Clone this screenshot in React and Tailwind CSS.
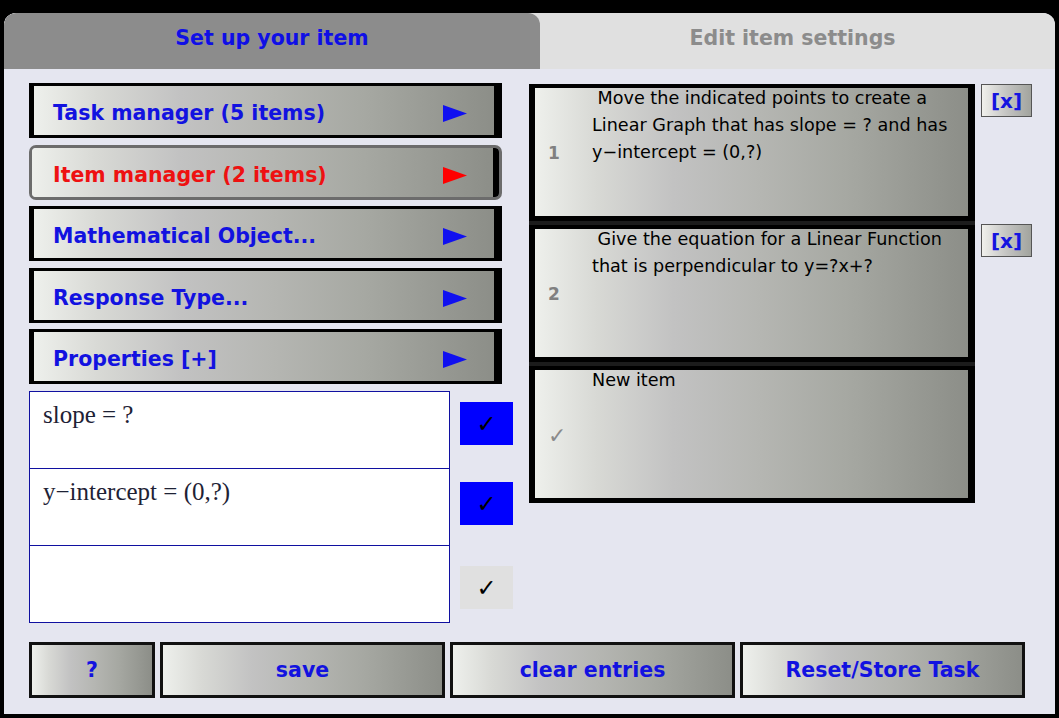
import React from "react";

const metal =
  "bg-[linear-gradient(to_right,#eef0ec_0%,#d8d9d5_14%,#c2c2c2_32%,#b5b6b2_52%,#a6a8a2_72%,#8c8e88_100%)]";

const sans = { fontFamily: '"DejaVu Sans", Verdana, sans-serif' };
const serif = { fontFamily: '"Liberation Serif", "Times New Roman", serif' };

function Arrow({ color }) {
  return (
    <svg width="24" height="17" viewBox="0 0 24 17" className="shrink-0">
      <polygon points="0,0 24,8.5 0,17" fill={color} />
    </svg>
  );
}

function MenuButton({ label, active }) {
  if (active) {
    return (
      <div className="h-[55px] w-[473px] rounded-[7px] border-[3px] border-[#6c6c6c] overflow-hidden">
        <div
          className={`h-full flex items-center justify-between pl-[21px] pr-[26px] pt-[6px] border-r-[6px] border-black ${metal}`}
        >
          <span className="text-[20.5px] font-bold text-[#ee1111]">{label}</span>
          <Arrow color="#ff0000" />
        </div>
      </div>
    );
  }
  return (
    <div
      className={`h-[55px] w-[473px] flex items-center justify-between pl-[19px] pr-[27px] pt-[6px] border-l-[5px] border-t-[3px] border-b-[3px] border-r-[8px] border-black ${metal}`}
    >
      <span className="text-[20.5px] font-bold text-[#1212e0]">{label}</span>
      <Arrow color="#1010f0" />
    </div>
  );
}

function InputRow({ text, checked, checkTop, last }) {
  return (
    <div className="flex">
      <div
        className={`w-[421px] h-[77px] bg-white border-[#1010a0] border-l border-r border-t ${
          last ? "border-b h-[78px]" : ""
        } pl-[13px] pt-[4px] text-[25px] text-[#1e2235]`}
        style={serif}
      >
        {text}
      </div>
      <div className={`ml-[10px] ${checkTop}`}>
        <div
          className={`w-[53px] h-[43px] flex items-center justify-center text-[24px] text-black ${
            checked ? "bg-[#0000ff]" : "bg-[#e0e0e0]"
          }`}
        >
          ✓
        </div>
      </div>
    </div>
  );
}

function ItemCard({ label, lines, mark }) {
  return (
    <div
      className={`h-[137px] flex border-l-[6px] border-t-[4px] border-r-[7px] border-b-[5px] border-black ${metal}`}
    >
      <div className="w-[57px] shrink-0 flex items-center pl-[13px] pt-[3px]">
        <span
          className={
            mark
              ? "text-[22px] text-[#8a8a8a]"
              : "text-[17px] font-bold text-[#808080]"
          }
        >
          {label}
        </span>
      </div>
      <div className="flex-1 -mt-[3px] text-[17.6px] leading-[27px] text-black whitespace-pre">
        {lines.map((l, i) => (
          <div key={i}>{l}</div>
        ))}
      </div>
    </div>
  );
}

function CloseButton() {
  return (
    <div className="w-[51px] h-[33px] flex items-center justify-center border border-[#555] bg-[linear-gradient(to_right,#f0f0ec,#c4c4c2_50%,#a2a49e)]">
      <span className="text-[20px] font-bold text-[#1414e0]">[x]</span>
    </div>
  );
}

function BottomButton({ label, w }) {
  return (
    <div
      className={`${w} h-[56px] flex items-center justify-center border-[3px] border-[#111] ${metal}`}
    >
      <span className="text-[20.5px] font-bold text-[#1212e0]">{label}</span>
    </div>
  );
}

export default function App() {
  return (
    <div
      className="w-[1059px] h-[718px] bg-black pt-[13px] pl-[4px] pr-[4px] pb-[4px]"
      style={sans}
    >
      <div className="h-full bg-[#e5e6f0] rounded-t-[12px] overflow-hidden flex flex-col">
        {/* Tabs */}
        <div className="h-[56px] flex bg-[#e0e0e0] shrink-0">
          <div className="w-[536px] rounded-t-[12px] bg-[#8c8c8c] flex items-center justify-center pb-[6px]">
            <span className="text-[20.5px] font-bold text-[#0f0fe6]">Set up your item</span>
          </div>
          <div className="flex-1 flex items-center justify-center pr-[10px] pb-[6px]">
            <span className="text-[20.5px] font-bold text-[#8c8c8c]">Edit item settings</span>
          </div>
        </div>

        {/* Body */}
        <div className="flex-1 flex flex-col pl-[25px] pt-[14px] pb-[16px]">
          <div className="flex items-start">
            {/* Left column */}
            <div className="w-[500px] flex flex-col">
              <div className="flex flex-col gap-[6.5px]">
                <MenuButton label="Task manager (5 items)" />
                <MenuButton label="Item manager (2 items)" active />
                <MenuButton label="Mathematical Object..." />
                <MenuButton label="Response Type..." />
                <MenuButton label="Properties [+]" />
              </div>
              <div className="mt-[7px] flex flex-col">
                <InputRow text="slope = ?" checked checkTop="mt-[11px]" />
                <InputRow text="y−intercept = (0,?)" checked checkTop="mt-[14px]" />
                <InputRow text="" checkTop="mt-[21px]" last />
              </div>
            </div>

            {/* Right column */}
            <div className="flex items-start mt-[1px]">
              <div className="w-[446px] flex flex-col gap-[4px] bg-[#1c1c1c]">
                <ItemCard
                  label="1"
                  lines={[
                    " Move the indicated points to create a",
                    "Linear Graph that has slope = ? and has",
                    "y−intercept = (0,?)",
                  ]}
                />
                <ItemCard
                  label="2"
                  lines={[
                    " Give the equation for a Linear Function",
                    "that is perpendicular to y=?x+?",
                  ]}
                />
                <ItemCard label="✓" mark lines={["New item"]} />
              </div>
              <div className="ml-[6px] flex flex-col gap-[107px]">
                <CloseButton />
                <CloseButton />
              </div>
            </div>
          </div>

          {/* Bottom buttons */}
          <div className="mt-auto flex gap-[5px]">
            <BottomButton label="?" w="w-[126px]" />
            <BottomButton label="save" w="w-[285px]" />
            <BottomButton label="clear entries" w="w-[285px]" />
            <BottomButton label="Reset/Store Task" w="w-[285px]" />
          </div>
        </div>
      </div>
    </div>
  );
}
